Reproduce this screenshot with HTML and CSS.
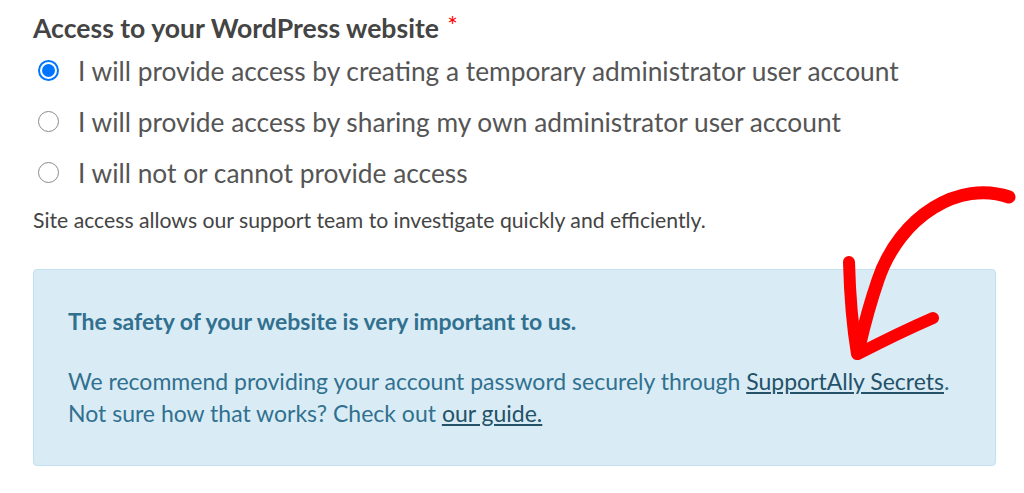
FILE: index.html
```html
<!DOCTYPE html>
<html>
<head>
<meta charset="utf-8">
<link rel="stylesheet" href="styles.css">
</head>
<body>
<div class="page">
  <div class="field">
    <div class="label">Access to your WordPress website <span class="req">*</span></div>
    <ul class="options">
      <li class="option"><span class="radio checked"></span><span class="opt-text">I will provide access by creating a temporary administrator user account</span></li>
      <li class="option"><span class="radio"></span><span class="opt-text">I will provide access by sharing my own administrator user account</span></li>
      <li class="option"><span class="radio"></span><span class="opt-text">I will not or cannot provide access</span></li>
    </ul>
    <div class="help">Site access allows our support team to investigate quickly and efficiently.</div>
  </div>
  <div class="notice">
    <p class="notice-title">The safety of your website is very important to us.</p>
    <p class="notice-body">We recommend providing your account password securely through <a class="link">SupportAlly Secrets</a>.<br>Not sure how that works? Check out <a class="link">our guide.</a></p>
  </div>
  <svg class="arrow" width="1024" height="493" viewBox="0 0 1024 493">
    <path d="M1009 197 C 960 180, 900 215, 878 280 C 866 315, 862 335, 858 352" fill="none" stroke="#ff0000" stroke-width="13" stroke-linecap="round"/>
    <path d="M849 262 C 850 300, 853 330, 857 354" fill="none" stroke="#ff0000" stroke-width="12" stroke-linecap="round"/>
    <path d="M858 354 C 885 340, 910 328, 933 318" fill="none" stroke="#ff0000" stroke-width="12" stroke-linecap="round"/>
  </svg>
</div>
</body>
</html>
```
FILE: styles.css
```css
html, body { margin: 0; padding: 0; background: #fff; }
body { font-family: Lato, "Open Sans", sans-serif; width: 1024px; height: 493px; overflow: hidden; }
.page { position: relative; padding: 12px 28px 0 33px; }
.label { font-size: 26.6px; font-weight: 700; color: #444; line-height: 32px; }
.req { color: #ff0000; font-weight: 400; font-size: 25px; vertical-align: top; position: relative; top: -3px; margin-left: 2px; }
.options { list-style: none; margin: 1px 0 0 5px; padding: 0; }
.option { display: flex; align-items: center; height: 51px; font-size: 26.3px; color: #555; }
.radio { width: 21px; height: 21px; border: 1.5px solid #8a8a8a; border-radius: 50%; box-sizing: border-box; margin: 0 19px 0 0; flex: none; position: relative; }
.radio.checked { border: 2.5px solid #0075ff; }
.radio.checked::after { content: ""; position: absolute; left: 1.5px; top: 1.5px; width: 13px; height: 13px; border-radius: 50%; background: #0075ff; }
.help { font-size: 21.2px; line-height: 26px; color: #444; margin-top: 9px; }
.notice { margin-top: 36px; background: #d9ecf6; border: 1px solid #c2e0f0; border-radius: 4px; padding: 37px 34px 36px 34px; color: #31708f; }
.notice p { margin: 0; font-size: 23px; }
.notice-title { font-weight: 700; line-height: 28px; }
.notice-body { margin-top: 30px !important; line-height: 32px; }
.link { color: #245269; text-decoration: underline; }
.arrow { position: absolute; left: 0; top: 0; }
```
